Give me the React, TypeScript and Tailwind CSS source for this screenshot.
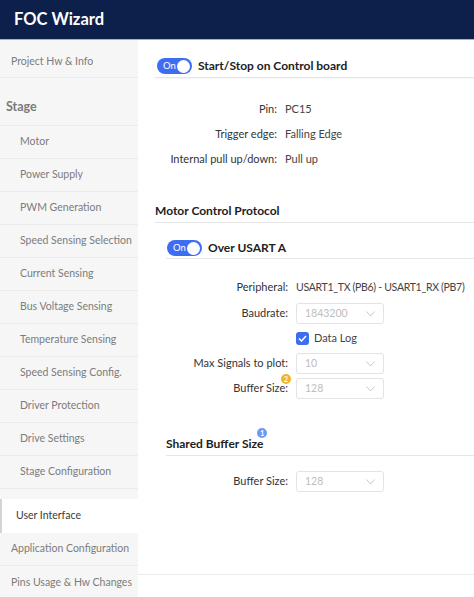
import React from "react";

const font = { fontFamily: 'Lato, "Noto Sans", sans-serif' };

const stageItems = [
  "Motor",
  "Power Supply",
  "PWM Generation",
  "Speed Sensing Selection",
  "Current Sensing",
  "Bus Voltage Sensing",
  "Temperature Sensing",
  "Speed Sensing Config.",
  "Driver Protection",
  "Drive Settings",
  "Stage Configuration",
];

const Toggle = () => (
  <div className="flex items-center w-[35px] h-[16px] rounded-full bg-[#3d6ef2] pl-[6px] pr-[2px] justify-between">
    <span className="text-[9.5px] leading-none text-white">On</span>
    <span className="w-[13px] h-[13px] rounded-full bg-white" />
  </div>
);

const Select = ({ value }: { value: string }) => (
  <div className="flex items-center justify-between w-[88px] h-[21px] border border-[#e3e3e3] rounded-[3px] px-[8px]">
    <span className="text-[10.5px] text-[#bdbdbd]">{value}</span>
    <svg width="9" height="6" viewBox="0 0 9 6" fill="none">
      <path d="M0.5 0.5 L4.5 5 L8.5 0.5" stroke="#c8c8c8" strokeWidth="1" />
    </svg>
  </div>
);

const Row = ({
  label,
  children,
  badge,
  h = "h-[25px]",
}: {
  label: string;
  children: React.ReactNode;
  badge?: React.ReactNode;
  h?: string;
}) => (
  <div className={`flex items-center whitespace-nowrap ${h}`}>
    <div className="w-[122px] text-right text-[11px] text-[#333] relative">
      {badge}
      {label}
    </div>
    <div className="ml-[8px] text-[11px] text-[#444] flex items-center">{children}</div>
  </div>
);

const Badge = ({ n, color }: { n: string; color: string }) => (
  <span
    className={`absolute w-[10px] h-[10px] rounded-full text-white text-[7px] leading-[10px] text-center font-bold ${color}`}
  >
    {n}
  </span>
);

export default function App() {
  return (
    <div className="w-[474px] h-[597px] overflow-hidden bg-white flex flex-col" style={font}>
      <div className="h-[40px] shrink-0 bg-[#0d1f4b] border-b border-[#9fb2d0] flex items-center pl-[14px]">
        <span className="text-white font-bold text-[16.5px]">FOC Wizard</span>
      </div>
      <div className="flex flex-1 whitespace-nowrap">
        <div className="w-[138px] shrink-0 bg-[#f6f6f6] flex flex-col text-[10.5px] text-[#7c7c7c]">
          <div className="h-[38px] pl-[11px] pt-[14px] border-b border-[#ebebeb]">Project Hw &amp; Info</div>
          <div className="h-[48px] pl-[6px] pt-[20px] border-b border-[#ebebeb] font-bold text-[12.5px] text-[#7a7a7a]">
            Stage
          </div>
          {stageItems.map((s) => (
            <div key={s} className="h-[33px] pl-[20px] flex items-center border-b border-[#ebebeb]">
              {s}
            </div>
          ))}
          <div className="h-[10px]" />
          <div className="h-[34px] pl-[14px] flex items-center bg-white border-l-[2px] border-[#d4d4d4] text-[#3a3a3a]">
            User Interface
          </div>
          <div className="h-[33px] pl-[11px] flex items-center border-b border-[#ebebeb]">Application Configuration</div>
          <div className="h-[33px] pl-[11px] flex items-center">Pins Usage &amp; Hw Changes</div>
        </div>

        <div className="flex-1 flex flex-col min-w-0">
          <div className="pl-[17px] pt-[17px]">
            <div className="flex items-center gap-[6px] pl-[2px] pb-[2px] border-b border-[#e6e6e6] shadow-[0_1px_1px_rgba(0,0,0,0.03)]">
              <Toggle />
              <span className="font-bold text-[12px] text-[#222]">Start/Stop on Control board</span>
            </div>
            <div className="pt-[19px]">
              <Row label="Pin:">PC15</Row>
              <Row label="Trigger edge:">Falling Edge</Row>
              <Row label="Internal pull up/down:">Pull up</Row>
            </div>
            <div className="mt-[30px] pb-[2px] border-b border-[#e6e6e6] font-bold text-[12px] text-[#222]">
              Motor Control Protocol
            </div>
            <div className="pl-[11px] pt-[16px]">
              <div className="flex items-center gap-[6px] pl-[1px] pb-[1px] border-b border-[#e6e6e6]">
                <Toggle />
                <span className="font-bold text-[12px] text-[#222]">Over USART A</span>
              </div>
              <div className="pt-[15px]">
                <Row label="Peripheral:" h="h-[27px]">
                  <span className="text-[10.5px] tracking-[-0.3px]">USART1_TX (PB6) - USART1_RX (PB7)</span>
                </Row>
                <Row label="Baudrate:">
                  <Select value="1843200" />
                </Row>
                <Row label="">
                  <span className="w-[13px] h-[13px] rounded-[3px] bg-[#3d6ef2] flex items-center justify-center mr-[5px]">
                    <svg width="9" height="7" viewBox="0 0 9 7" fill="none">
                      <path d="M1 3.5 L3.5 6 L8 1" stroke="white" strokeWidth="1.5" />
                    </svg>
                  </span>
                  Data Log
                </Row>
                <Row label="Max Signals to plot:">
                  <Select value="10" />
                </Row>
                <Row label="Buffer Size:" badge={<Badge n="2" color="bg-[#f0b429] right-[-3px] top-[-6px]" />}>
                  <Select value="128" />
                </Row>
              </div>
              <div className="mt-[29px] pb-[1px] border-b border-[#e6e6e6]">
                <span className="relative font-bold text-[12px] text-[#222]">
                  Shared Buffer Size
                  <Badge n="1" color="bg-[#6b9af5] right-[-4px] top-[-8px]" />
                </span>
              </div>
              <div className="pt-[13px]">
                <Row label="Buffer Size:">
                  <Select value="128" />
                </Row>
              </div>
            </div>
          </div>
          <div className="mt-auto mb-[24px] border-b border-[#ebebeb]" />
        </div>
      </div>
    </div>
  );
}
